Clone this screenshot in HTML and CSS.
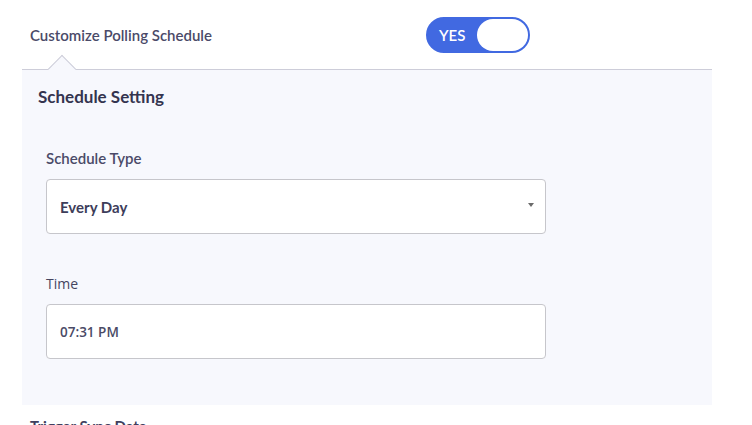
FILE: index.html
```html
<!DOCTYPE html>
<html lang="en">
<head>
<meta charset="utf-8">
<title>Polling Schedule</title>
<link rel="stylesheet" href="styles.css">
</head>
<body>
<div class="wrap">
  <div class="header">
    <span class="title">Customize Polling Schedule</span>
    <div class="toggle">
      <span class="toggle-text">YES</span>
      <span class="knob"></span>
    </div>
  </div>
  <div class="panel">
    <span class="caret"></span>
    <div class="panel-title">Schedule Setting</div>
    <div class="fields">
      <div class="field">
        <label class="label label-a">Schedule Type</label>
        <div class="box select">
          <span class="value value-a">Every Day</span>
          <span class="arrow"></span>
        </div>
      </div>
      <div class="field field-b">
        <label class="label label-b">Time</label>
        <div class="box">
          <span class="value value-b">07:31 PM</span>
        </div>
      </div>
    </div>
  </div>
  <div class="next">Trigger Sync Data</div>
</div>
</body>
</html>
```

FILE: styles.css
```css
* { box-sizing: border-box; }
html, body { margin: 0; padding: 0; background: #fff; }
body {
  font-family: "Lato", "Noto Sans", sans-serif;
  color: #3f3f5e;
  overflow: hidden;
}
.wrap {
  margin-left: 22px;
  width: 690px;
}
.header {
  height: 69px;
  display: flex;
  align-items: center;
  padding-left: 8px;
}
.title {
  width: 396px;
  font-size: 15px;
  font-weight: 600;
  color: #4a4a68;
}
.toggle {
  width: 104px;
  height: 36px;
  border-radius: 18px;
  background: #4169e1;
  border: 2px solid #4169e1;
  display: flex;
  align-items: center;
  justify-content: space-between;
  padding-left: 11px;
}
.toggle-text {
  color: #fff;
  font-size: 15px;
  font-weight: 600;
}
.knob {
  width: 51px;
  height: 32px;
  border-radius: 16px;
  background: #fff;
}
.panel {
  position: relative;
  background: #f7f8fd;
  border-top: 1px solid #cdcdd9;
  padding: 17px 0 46px 16px;
}
.caret {
  position: absolute;
  left: 30px;
  top: -11px;
  width: 20px;
  height: 20px;
  background: #f7f8fd;
  border-top: 1px solid #cdcdd9;
  border-left: 1px solid #cdcdd9;
  transform: rotate(45deg);
}
.panel-title {
  font-size: 17px;
  font-weight: 700;
  line-height: 20px;
  color: #34344f;
}
.fields {
  padding-left: 8px;
  padding-top: 41px;
  display: flex;
  flex-direction: column;
  gap: 40px;
}
.field {
  display: flex;
  flex-direction: column;
  gap: 11px;
}
.field-b { gap: 10px; }
.label {
  font-size: 15px;
  line-height: 20px;
  color: #4a4a68;
}
.label-a { font-weight: 600; }
.label-b { font-family: "Open Sans", sans-serif; font-size: 14px; color: #45455f; }
.box {
  width: 500px;
  height: 55px;
  background: #fff;
  border: 1px solid #c6c6cb;
  border-radius: 4px;
  display: flex;
  align-items: center;
  padding: 0 11px 0 13px;
}
.select { justify-content: space-between; }
.value {
  font-size: 15px;
  color: #3d3d5a;
}
.value-a { font-weight: 700; }
.value-b { font-family: "Open Sans", sans-serif; font-size: 13.5px; font-weight: 600; color: #4a4a66; }
.arrow {
  width: 0;
  height: 0;
  border-left: 3px solid transparent;
  border-right: 3px solid transparent;
  border-top: 4px solid #6b6b6b;
  margin-top: -3px;
}
.next {
  padding: 12px 0 0 8px;
  font-size: 15px;
  font-weight: 700;
  color: #3f3f5e;
}
```
